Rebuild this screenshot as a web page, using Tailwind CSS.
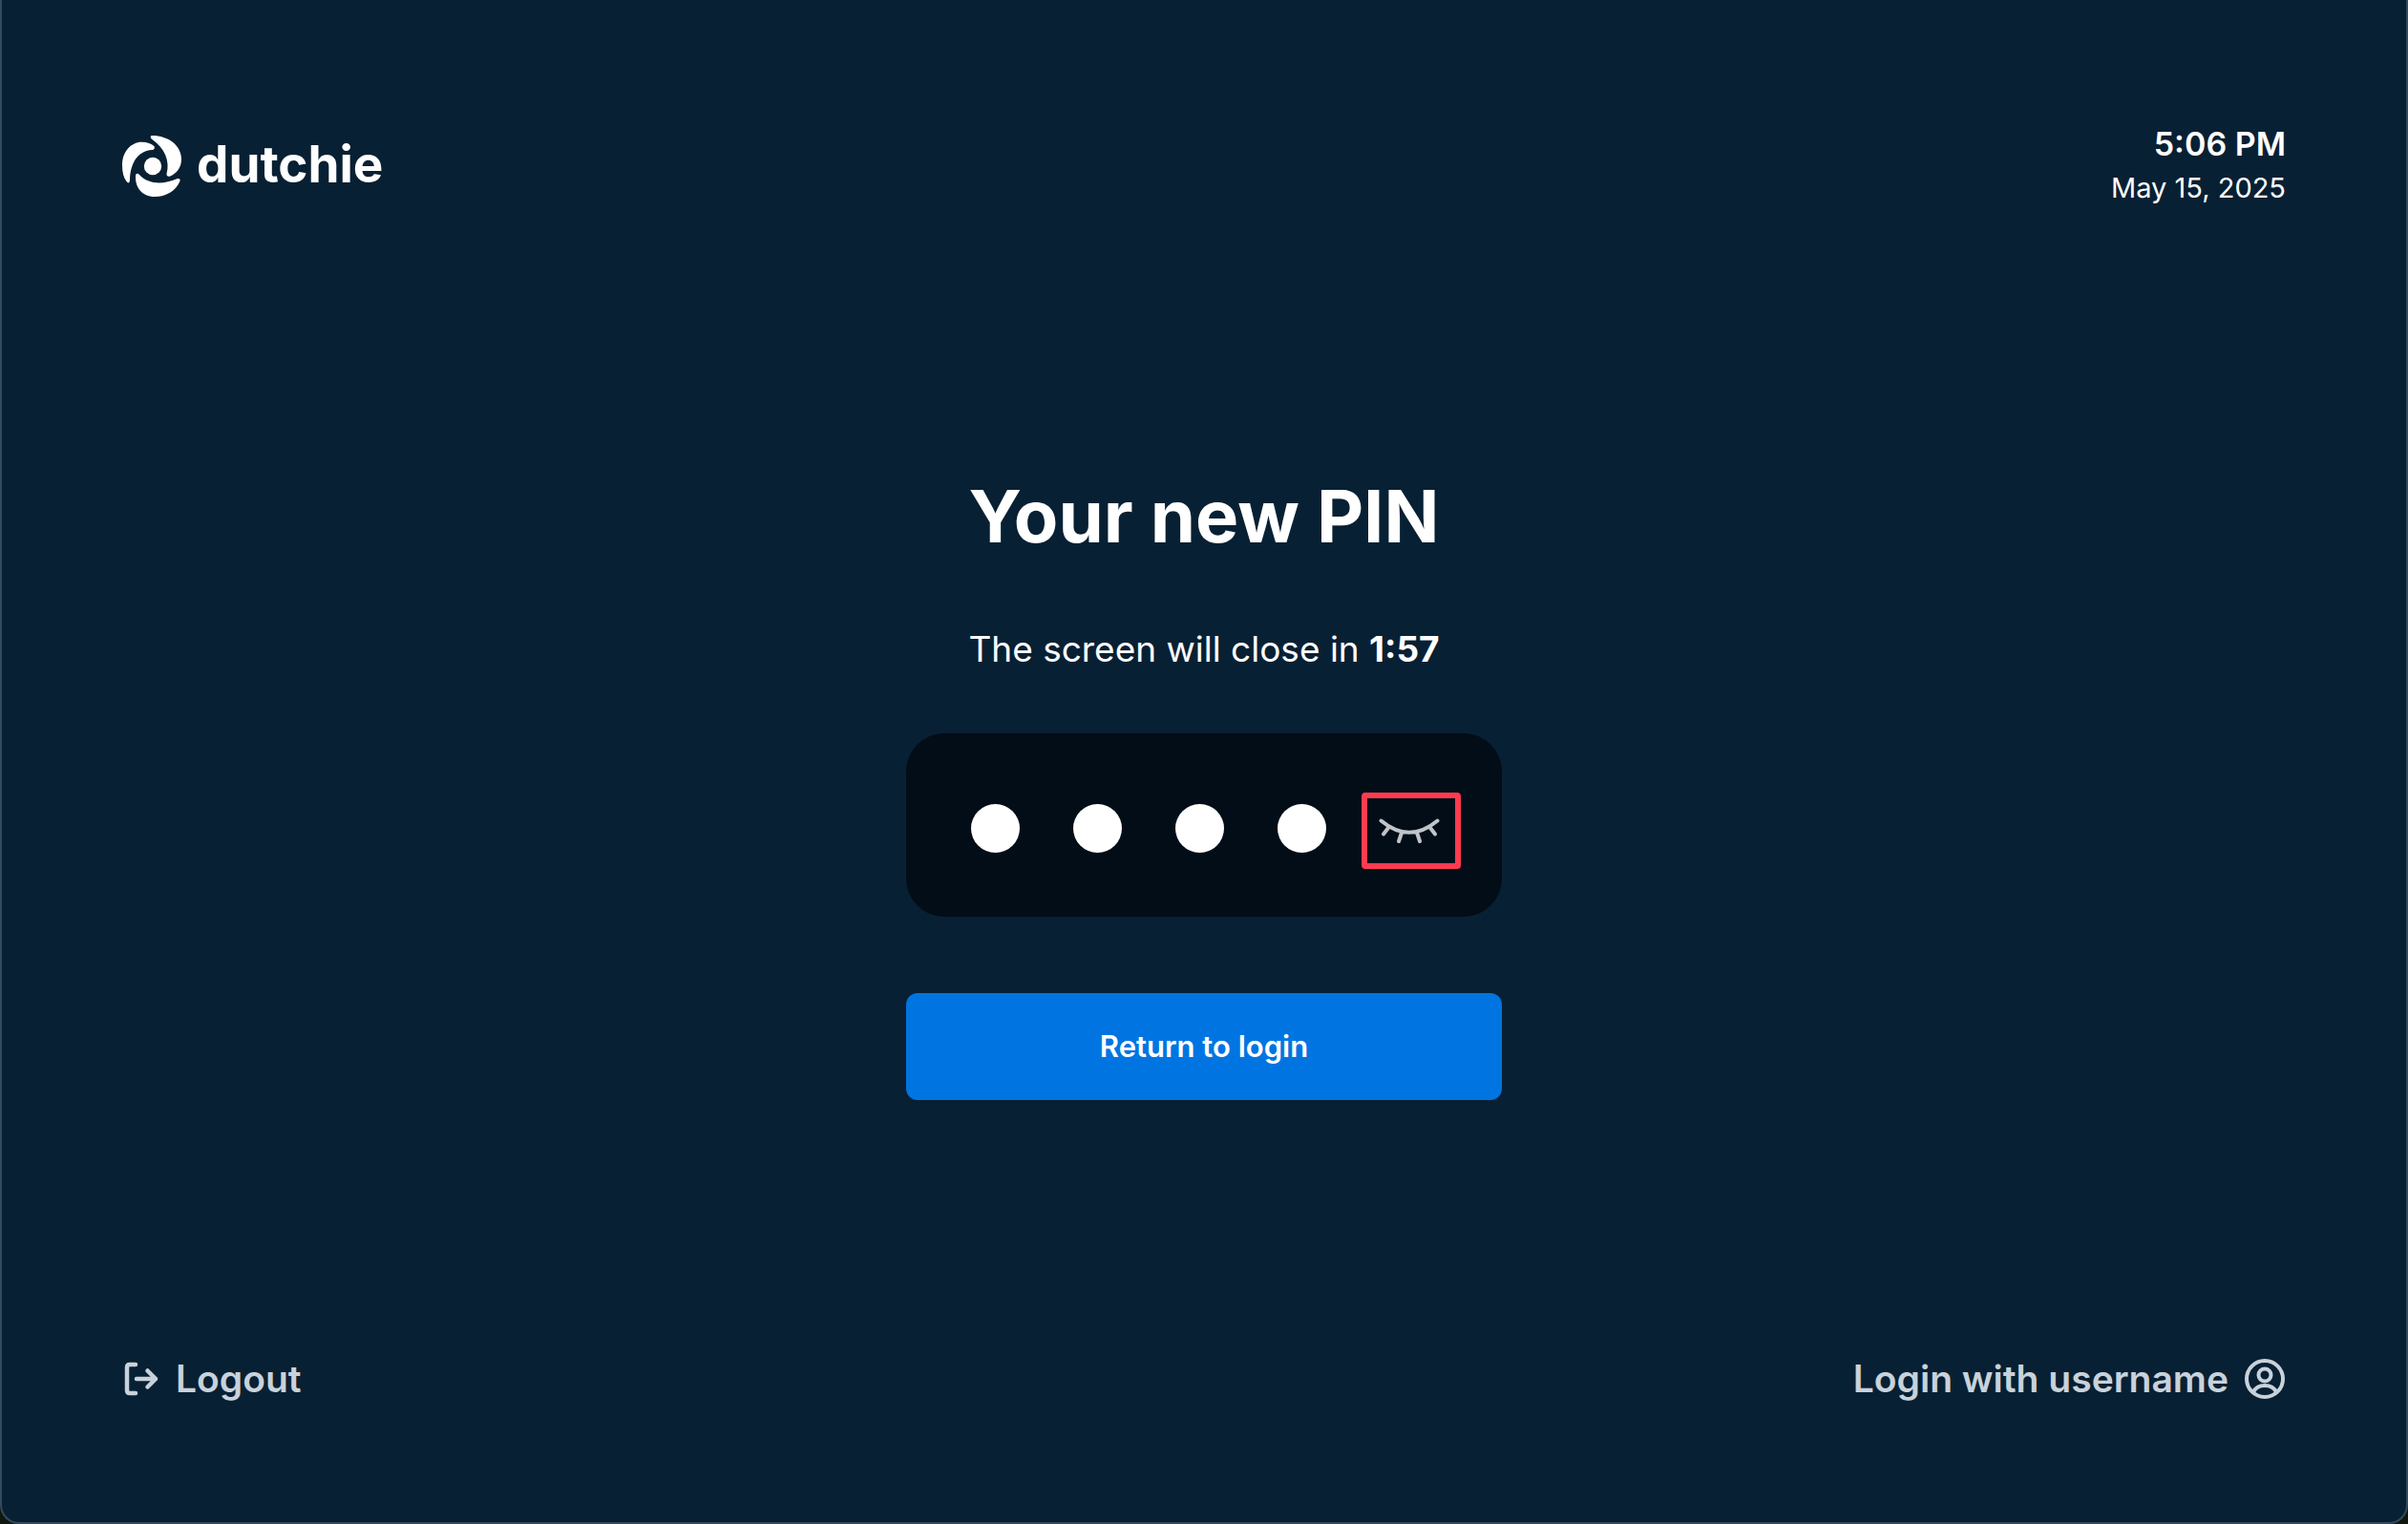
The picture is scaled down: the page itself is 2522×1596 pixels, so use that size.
<!DOCTYPE html>
<html lang="en">
<head>
<meta charset="utf-8">
<meta name="viewport" content="width=device-width, initial-scale=1">
<title>Your new PIN</title>
<script src="https://cdn.jsdelivr.net/npm/@tailwindcss/browser@4"></script>
</head>
<body class="bg-[#10170f] font-['Inter',sans-serif] text-white">
<div class="flex min-h-screen flex-col rounded-b-[20px] border-x-2 border-b-2 border-[#354a5c] bg-[#082033] px-[126px] pt-32 pb-[126px]">
  <header class="flex items-center justify-between">
    <a href="#" aria-label="dutchie" class="flex items-center gap-4">
      <svg class="h-16 w-[62px]" viewBox="54 66 186 192" fill="currentColor" aria-hidden="true">
        <circle cx="150" cy="162" r="27.500"/>
        <path d="M68 211C58 198 54 180 54 158C54 118 80 86 116 86C132 86 146 91 154 99C158 106 154 111 147 111C108 114 80 145 78 205C78 215 73 217 68 211Z"/>
        <path d="M148 66C200 66 240 98 240 140C240 165 226 185 203 194C196 196 192 191 194 184C204 146 188 105 147 77C141 71 143 66 148 66Z"/>
        <path d="M96 192C97 184 103 183 108 189C134 218 180 222 226 202C233 199 238 203 235 210C222 240 192 258 156 258C116 258 94 228 96 192Z"/>
      </svg>
      <span class="pb-1 text-[53px] leading-[60px] font-bold">dutchie</span>
    </a>
    <div class="text-right leading-[46px]">
      <p class="text-[34px] font-semibold">5:06 PM</p>
      <p class="text-[29px]">May 15, 2025</p>
    </div>
  </header>

  <main class="flex flex-1 flex-col items-center justify-center pt-1">
    <h1 class="text-[76px] leading-24 font-bold">Your new PIN</h1>
    <p class="mt-16 text-[37px] leading-14">The screen will close in <strong class="font-bold">1:57</strong></p>
    <div class="mt-[60px] flex h-48 w-[624px] items-center rounded-[40px] bg-[#020d17] pr-[43px] pl-[68px]">
      <div class="flex gap-14 pt-1.5" role="img" aria-label="4 digit PIN, hidden">
        <span class="size-[51px] rounded-full bg-white"></span>
        <span class="size-[51px] rounded-full bg-white"></span>
        <span class="size-[51px] rounded-full bg-white"></span>
        <span class="size-[51px] rounded-full bg-white"></span>
      </div>
      <button type="button" aria-label="Show PIN" class="mt-3 ml-auto flex h-20 w-[104px] items-center justify-center rounded-[4px] border-6 border-[#ff3b4f] pr-1 text-[#c0c4c8]">
        <svg class="h-[26px] w-16" viewBox="0 0 64 26" fill="none" stroke="currentColor" stroke-width="4" stroke-linecap="round" aria-hidden="true">
          <path d="M2.500 2.500Q32 27 61.500 2.500M10 10L5 16.500M24 15L21 24M40 15L43 24M54 10L59 16.500"/>
        </svg>
      </button>
    </div>
    <button type="button" class="mt-20 h-28 w-[624px] rounded-xl bg-[#0075e1] text-[31px] leading-10 font-semibold">Return to login</button>
  </main>

  <footer class="flex items-center justify-between text-[39px] leading-12 font-semibold text-[#c8d2db]">
    <a href="#" class="flex items-center gap-4">
      <svg class="size-10" viewBox="0 0 40 40" fill="none" stroke="currentColor" stroke-width="4.500" stroke-linecap="round" stroke-linejoin="round" aria-hidden="true">
        <path d="M14 5H8Q5 5 5 8V32Q5 35 8 35H14M15 20H35M26.500 11.500L35 20L26.500 28.500"/>
      </svg>
      Logout
    </a>
    <a href="#" class="flex items-center gap-4">
      Login with username
      <svg class="size-11" viewBox="0 0 44 44" fill="none" stroke="currentColor" stroke-width="4" aria-hidden="true">
        <circle cx="22" cy="22" r="19"/><circle cx="22" cy="18" r="6.500"/>
        <path d="M10 36C12 31.500 16 29 22 29S32 31.500 34 36"/>
      </svg>
    </a>
  </footer>
</div>
</body>
</html>
